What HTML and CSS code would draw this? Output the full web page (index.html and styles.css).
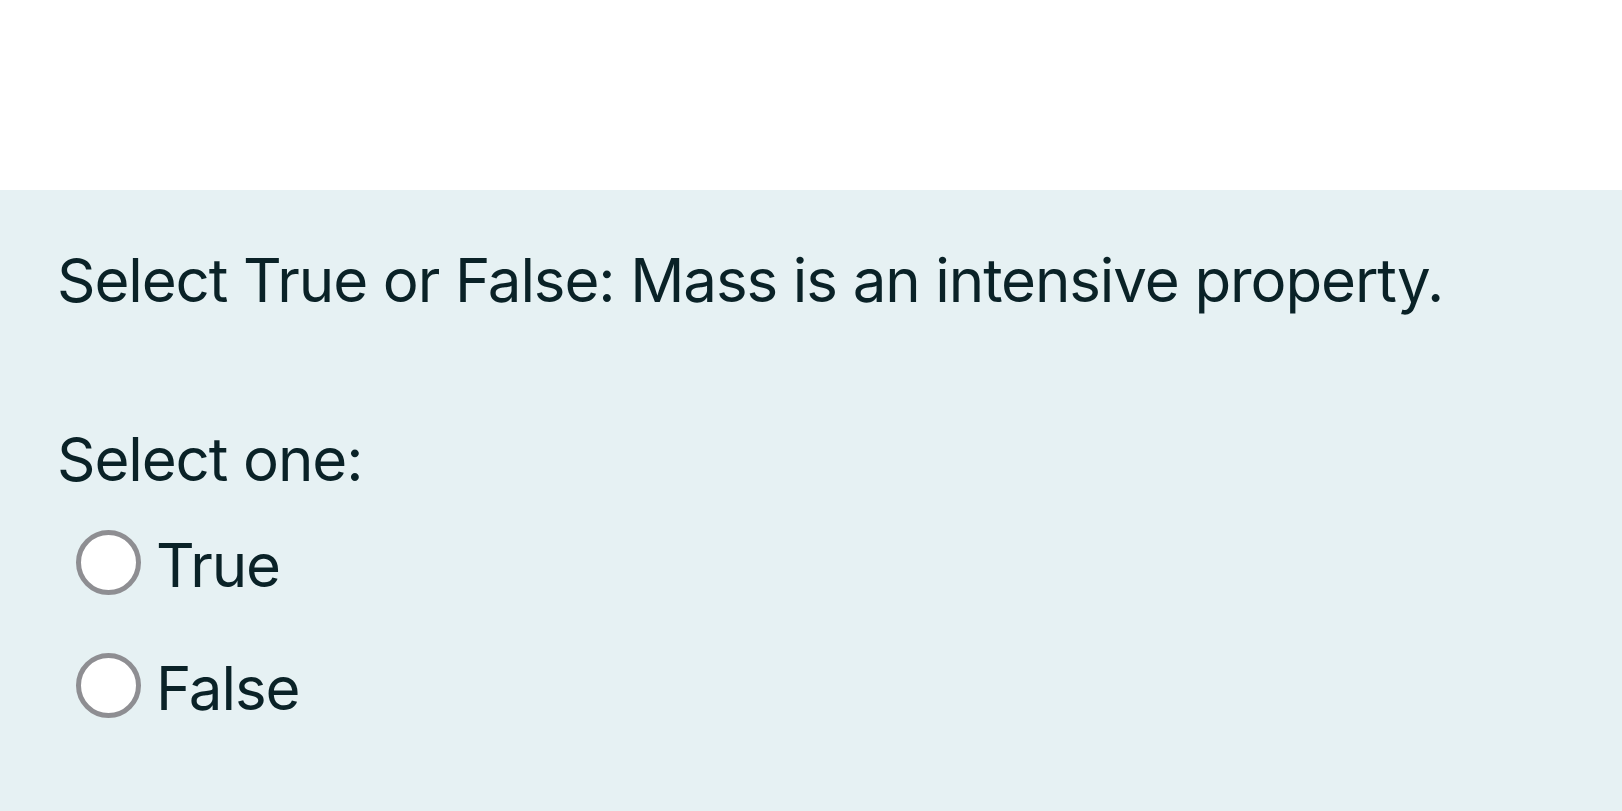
FILE: index.html
```html
<!DOCTYPE html>
<html lang="en">

<head>
    <meta charset="UTF-8">
    <meta name="viewport" content="width=device-width, initial-scale=1.0">
    <title>Question</title>
    <link rel="stylesheet" href="styles.css">
</head>

<body>
    <div class="page-top"></div>

    <!-- Question block -->
    <div class="que">
        <div class="qtext">Select True or False: Mass is an intensive property.</div>

        <div class="prompt">Select one:</div>
        <div class="answer">
            <label class="option">
                <input type="radio" name="q1" value="1">
                <span>True</span>
            </label>
            <label class="option">
                <input type="radio" name="q1" value="0">
                <span>False</span>
            </label>
        </div>
    </div>
</body>

</html>
```

FILE: styles.css
```css
body {
    margin: 0;
    font-family: Inter, "Noto Sans", sans-serif;
    color: #0a2227;
    background-color: #fff;
}

.page-top {
    height: 190px;
    background-color: #fff;
}

/* Question area */
.que {
    background-color: #e6f1f3;
    padding: 54px 57px 60px;
    min-height: 621px;
    box-sizing: border-box;
}

.qtext,
.prompt,
.option {
    font-size: 60px;
    line-height: 72px;
    letter-spacing: -1.1px;
}

.prompt {
    margin-top: 107px;
}

.answer {
    display: flex;
    flex-direction: column;
    gap: 51px;
    margin-top: 34px;
}

.option {
    display: flex;
    align-items: center;
    gap: 15px;
    padding-left: 19px;
}

/* Radio circle */
.option input[type="radio"] {
    appearance: none;
    -webkit-appearance: none;
    width: 65px;
    height: 65px;
    margin: 0;
    box-sizing: border-box;
    border: 5px solid #8e8e92;
    border-radius: 50%;
    background-color: #fff;
    position: relative;
    top: -3px;
}
```
